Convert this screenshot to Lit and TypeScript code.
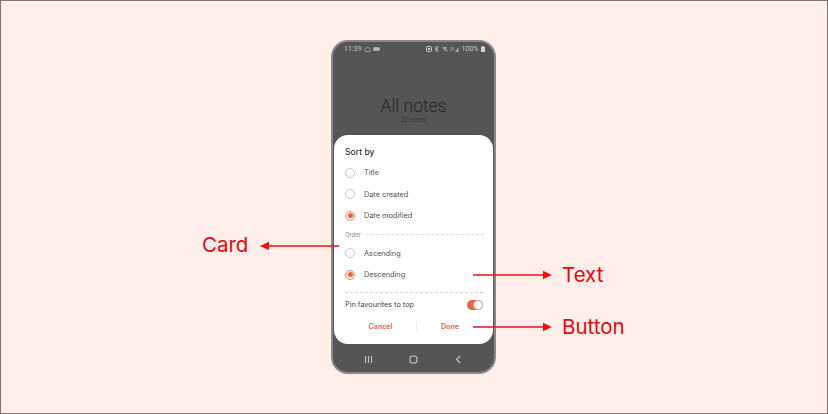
import { LitElement, html, css, svg } from "lit";
import { customElement } from "lit/decorators.js";

@customElement("app-root")
export class AppRoot extends LitElement {
  static styles = css`
    :host { display: block; width: 828px; height: 414px; font-family: Roboto, "Liberation Sans", sans-serif; }
    .page { position: relative; box-sizing: border-box; width: 828px; height: 414px; background: #ffeeea; border: 1px solid #7a7472; display: flex; align-items: center; justify-content: center; overflow: hidden; }
    .phone { box-sizing: border-box; width: 165px; height: 334px; margin-left: -1px; background: #555; border: 2px solid #8b8786; border-radius: 17px; display: flex; flex-direction: column; overflow: hidden; }
    .status { height: 14px; padding: 0 9px 0 11px; display: flex; align-items: center; justify-content: space-between; color: #c4c4c4; font-size: 7px; flex: none; }
    .status div { display: flex; align-items: center; gap: 2.5px; }
    .title { height: 79px; padding-bottom: 10px; box-sizing: border-box; flex: none; display: flex; flex-direction: column; align-items: center; justify-content: flex-end; color: #262626; }
    .title h1 { margin: 0; font-weight: 300; font-size: 17.5px; line-height: 20px; }
    .title span { font-size: 6.5px; line-height: 9px; color: #3a3a3a; }
    .sheet { flex: none; height: 209px; margin: 0 1px; background: #fff; border-radius: 14px; box-sizing: border-box; padding: 11px 10px 0 11px; display: flex; flex-direction: column; color: #505050; font-size: 7.3px; font-family: Inter, Roboto, sans-serif; }
    .head { font-size: 8.6px; font-weight: 500; color: #333; line-height: 12px; margin-bottom: 4px; }
    .row { height: 21.5px; display: flex; align-items: center; gap: 9px; }
    .radio { box-sizing: border-box; width: 10px; height: 10px; border-radius: 50%; border: 1px solid #c9c9c9; flex: none; display: flex; align-items: center; justify-content: center; }
    .radio.on { border-color: #ef8f7c; background: #fde9e4; }
    .radio.on::after { content: ""; width: 5px; height: 5px; border-radius: 50%; background: #e8654d; }
    .order { display: flex; align-items: center; gap: 5px; font-size: 5.9px; color: #8a8a8a; height: 15px; padding-top: 1px; box-sizing: border-box; margin-bottom: 1px; }
    .order i { flex: 1; border-top: 1px dashed #dcdcdc; margin-right: -1px; }
    .rule { border-top: 1px dashed #d6d6d6; margin: 6px 0 0; }
    .pin { height: 24px; display: flex; align-items: center; justify-content: space-between; color: #454545; font-size: 7.3px; }
    .toggle { box-sizing: border-box; width: 16px; height: 10px; border-radius: 5px; background: #e8654d; position: relative; }
    .toggle::after { content: ""; position: absolute; right: 0; top: 0; box-sizing: border-box; width: 10px; height: 10px; border-radius: 50%; background: #fff; border: 1px solid #f0a595; }
    .actions { flex: 1; display: flex; align-items: center; color: #e8654d; font-size: 7.1px; font-weight: 600; margin: -1px 0 6px 0; }
    .actions span { text-align: center; }
    .actions .cancel { width: 71px; }
    .actions .done { flex: 1; }
    .actions b { width: 1px; height: 9px; background: #eee; flex: none; }
    .nav { flex: 1; display: flex; align-items: center; justify-content: center; gap: 36px; padding-top: 3px; }
    .note { position: absolute; color: #e8060c; font-size: 20.5px; line-height: 24px; font-family: Inter, "Liberation Sans", sans-serif; }
    .arrow { position: absolute; }
  `;

  private arrow(x: number, y: number, w: number, left: boolean) {
    const d = left ? `M${w} 5H8` : `M0 5H${w - 8}`;
    const h = left ? `M0 5L9 0.8V9.2Z` : `M${w} 5L${w - 9} 0.8V9.2Z`;
    return html`<svg class="arrow" style="left:${x}px;top:${y - 5}px" width=${w} height="10" viewBox="0 0 ${w} 10">
      ${svg`<path d=${d} stroke="#ee1111" stroke-width="1.4" fill="none"/><path d=${h} fill="#ee1111"/>`}
    </svg>`;
  }

  private radio(label: string, on = false) {
    return html`<div class="row"><span class="radio ${on ? "on" : ""}"></span><span>${label}</span></div>`;
  }

  render() {
    return html`<div class="page">
      <div class="phone">
        <div class="status">
          <div><span>11:39</span>
            <svg width="7" height="5" viewBox="0 0 7 5"><path d="M1.5 4.5h4a1.3 1.3 0 0 0 .2-2.6A2 2 0 0 0 2 1.6 1.5 1.5 0 0 0 1.5 4.5z" fill="none" stroke="#bdbdbd" stroke-width=".7"/></svg>
            <svg width="7" height="4" viewBox="0 0 7 4"><rect x=".3" y=".3" width="6.4" height="3.4" rx=".5" fill="#bdbdbd"/></svg>
          </div>
          <div>
            <svg width="6" height="6" viewBox="0 0 6 6"><rect x=".5" y=".5" width="5" height="5" rx="1" fill="none" stroke="#d0d0d0"/><rect x="2" y="2" width="2" height="2" fill="#d0d0d0"/></svg>
            <svg width="5" height="6" viewBox="0 0 5 6"><path d="M.5 1.5l4 3L2.5 6V0l2 1.5-4 3" fill="none" stroke="#c4c4c4" stroke-width=".7"/></svg>
            <svg width="6" height="6" viewBox="0 0 6 6"><path d="M.5 1l5 4M1 3a3 3 0 0 1 4-1M2.5 4.5h1" fill="none" stroke="#c8c8c8" stroke-width=".9"/></svg>
            <svg width="9" height="6" viewBox="0 0 9 6"><path d="M0 2h4M0 4h4" stroke="#a8a8a8" stroke-width=".8"/><path d="M5 6h3.5V1z" fill="#a8a8a8"/></svg>
            <span>100%</span>
            <svg width="4" height="6" viewBox="0 0 4 6"><path d="M1.2 0h1.6v.7H4V6H0V.7h1.2z" fill="#d4d4d4"/></svg>
          </div>
        </div>
        <div class="title"><h1>All notes</h1><span>22 notes</span></div>
        <div class="sheet">
          <div class="head">Sort by</div>
          ${this.radio("Title")}
          ${this.radio("Date created")}
          ${this.radio("Date modified", true)}
          <div class="order"><span>Order</span><i></i></div>
          ${this.radio("Ascending")}
          ${this.radio("Descending", true)}
          <div class="rule"></div>
          <div class="pin"><span>Pin favourites to top</span><span class="toggle"></span></div>
          <div class="actions"><span class="cancel">Cancel</span><b></b><span class="done">Done</span></div>
        </div>
        <div class="nav">
          <svg width="9" height="9" viewBox="0 0 9 9"><path d="M1.5 1v7M4.5 1v7M7.5 1v7" stroke="#c4c4c4" stroke-width="1.1"/></svg>
          <svg width="9" height="9" viewBox="0 0 9 9"><rect x="1" y="1" width="7" height="7" rx="2.6" fill="none" stroke="#c8c8c8" stroke-width="1.1"/></svg>
          <svg width="9" height="9" viewBox="0 0 9 9"><path d="M6.2 1L2.5 4.5 6.2 8" fill="none" stroke="#c4c4c4" stroke-width="1.1"/></svg>
        </div>
      </div>
      <span class="note" style="left:201px;top:232px">Card</span>
      <span class="note" style="left:561px;top:262px">Text</span>
      <span class="note" style="left:561px;top:314px">Button</span>
      ${this.arrow(259, 245, 79, true)}
      ${this.arrow(472, 274, 79, false)}
      ${this.arrow(472, 326, 79, false)}
    </div>`;
  }
}
